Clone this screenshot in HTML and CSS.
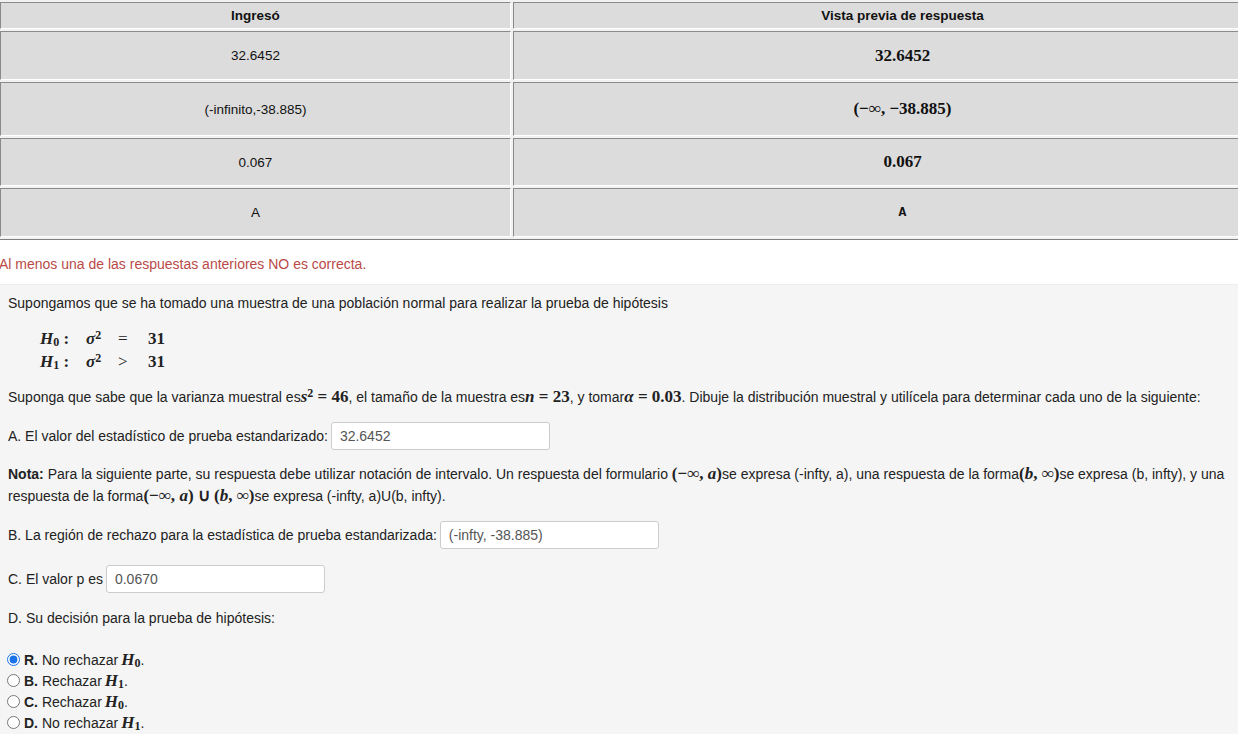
FILE: index.html
```html
<!DOCTYPE html>
<html lang="es">
<head>
<meta charset="utf-8">
<title>Vista previa</title>
<link rel="stylesheet" href="styles.css">
</head>
<body>
<div class="page">
  <table class="attempts">
    <tr class="head"><th class="c1">Ingresó</th><th>Vista previa de respuesta</th></tr>
    <tr class="r1"><td class="c1">32.6452</td><td class="mt">32.6452</td></tr>
    <tr class="r2"><td class="c1">(-infinito,-38.885)</td><td class="mt">(−∞, −38.885)</td></tr>
    <tr class="r3"><td class="c1">0.067</td><td class="mt">0.067</td></tr>
    <tr class="r4"><td class="c1">A</td><td class="mt mono">A</td></tr>
  </table>

  <div class="msg">Al menos una de las respuestas anteriores NO es correcta.</div>

  <div class="problem">
    <p class="p1">Supongamos que se ha tomado una muestra de una población normal para realizar la prueba de hipótesis</p>

    <div class="hyp">
      <span class="m"><i>H</i><sub>0</sub> :</span><span class="m"><i>σ</i><sup>2</sup></span><span class="m op">=</span><span class="m">31</span>
      <span class="m"><i>H</i><sub>1</sub> :</span><span class="m"><i>σ</i><sup>2</sup></span><span class="m op">&gt;</span><span class="m">31</span>
    </div>

    <p class="p2">Suponga que sabe que la varianza muestral es<span class="m"><i>s</i><sup>2</sup> = 46</span>, el tamaño de la muestra es<span class="m"><i>n</i> = 23</span>, y tomar<span class="m"><i>α</i> = 0.03</span>. Dibuje la distribución muestral y utilícela para determinar cada uno de la siguiente:</p>

    <div class="row ra">A. El valor del estadístico de prueba estandarizado: <span class="field">32.6452</span></div>

    <p class="nota"><b>Nota:</b> Para la siguiente parte, su respuesta debe utilizar notación de intervalo. Un respuesta del formulario <span class="m">(−∞, <i>a</i>)</span>se expresa (-infty, a), una respuesta de la forma<span class="m">(<i>b</i>, ∞)</span>se expresa (b, infty), y una respuesta de la forma<span class="m">(−∞, <i>a</i>) ∪ (<i>b</i>, ∞)</span>se expresa (-infty, a)U(b, infty).</p>

    <div class="row rb">B. La región de rechazo para la estadística de prueba estandarizada: <span class="field">(-infty, -38.885)</span></div>

    <div class="row rc">C. El valor p es <span class="field">0.0670</span></div>

    <p class="pd">D. Su decisión para la prueba de hipótesis:</p>

    <div class="choices">
      <label class="choice"><input type="radio" name="d" checked><b>R.</b>&nbsp;No rechazar <span class="m"><i>H</i><sub>0</sub></span>.</label>
      <label class="choice"><input type="radio" name="d"><b>B.</b>&nbsp;Rechazar <span class="m"><i>H</i><sub>1</sub></span>.</label>
      <label class="choice"><input type="radio" name="d"><b>C.</b>&nbsp;Rechazar <span class="m"><i>H</i><sub>0</sub></span>.</label>
      <label class="choice"><input type="radio" name="d"><b>D.</b>&nbsp;No rechazar <span class="m"><i>H</i><sub>1</sub></span>.</label>
    </div>
  </div>
</div>
</body>
</html>
```

FILE: styles.css
```css
html, body {
  margin: 0;
  padding: 0;
  overflow: hidden;
  background: #ffffff;
}

body {
  font-family: "Liberation Sans", Arial, sans-serif;
  font-size: 14px;
  color: #222;
  width: 1238px;
  height: 734px;
}

.page {
  width: 1300px;
}

.attempts {
  border-collapse: separate;
  border-spacing: 2px;
  margin: 0 0 0 -2px;
  width: 1296px;
  background: #f2f2f2;
  border-bottom: 1px solid #808080;
}

.attempts th,
.attempts td {
  background: #dcdcdc;
  border-top: 1px solid #8a8a8a;
  border-left: 1px solid #8a8a8a;
  border-right: 1px solid #ffffff;
  border-bottom: 1px solid #ffffff;
  text-align: center;
  padding: 0;
  font-size: 13.5px;
  color: #111;
  box-sizing: border-box;
}

.attempts th {
  font-weight: bold;
  height: 27px;
  font-size: 13.5px;
}

.attempts .c1 {
  width: 511px;
}

.r1 td { height: 49px; }
.r2 td { height: 54px; }
.r3 td { height: 48px; }
.r4 td { height: 49px; }

.attempts td.mt {
  font-family: "Liberation Serif", "Times New Roman", serif;
  font-weight: bold;
  font-size: 17px;
  color: #111;
}

.attempts td.mono {
  font-family: "Liberation Mono", monospace;
  font-size: 13px;
}

.msg {
  color: #b94a48;
  margin: 15px 0 0 -1px;
  line-height: 18px;
  height: 18px;
}

.problem {
  margin-top: 11px;
  background: #f5f5f5;
  border-top: 1px solid #ececec;
  padding: 9px 0 20px 8px;
  min-height: 460px;
}

.problem p {
  margin: 0;
  line-height: 18px;
}

.m {
  font-family: "Liberation Serif", "Times New Roman", serif;
  font-weight: bold;
  font-size: 17px;
  white-space: nowrap;
}

.m i {
  font-style: italic;
}

.m sup,
.m sub {
  font-size: 12px;
  line-height: 0;
}

.m sup {
  vertical-align: 0.45em;
}

.m sub {
  vertical-align: -0.15em;
}

.hyp {
  margin: 15px 0 0 32px;
  display: grid;
  grid-template-columns: 46px 32px 30px auto;
  grid-auto-rows: 23px;
  align-items: center;
  width: 180px;
}

.hyp .op {
  font-weight: normal;
  text-align: left;
}

.p2 {
  margin-top: 15px !important;
}

.row {
  display: flex;
  align-items: center;
  height: 28px;
  gap: 3px;
}

.ra { margin-top: 16px; }
.rb { margin-top: 14px; }
.rc { margin-top: 16px; }

.field {
  display: inline-flex;
  align-items: center;
  box-sizing: border-box;
  height: 28px;
  width: 219px;
  padding: 0 8px;
  background: #ffffff;
  border: 1px solid #cccccc;
  border-radius: 3px;
  color: #555;
  font-size: 14px;
}

.nota {
  margin-top: 13px !important;
  line-height: 22px !important;
  width: 1240px;
}

.pd {
  margin-top: 16px !important;
}

.choices {
  margin-top: 22px;
  display: flex;
  flex-direction: column;
}

.choice {
  display: flex;
  align-items: center;
  height: 21px;
  margin-left: -1px;
}

.choice input {
  margin: 0 4px 0 0;
  width: 13px;
  height: 13px;
  accent-color: #1a73e8;
}

.choice .m {
  margin-left: 3px;
}
```
